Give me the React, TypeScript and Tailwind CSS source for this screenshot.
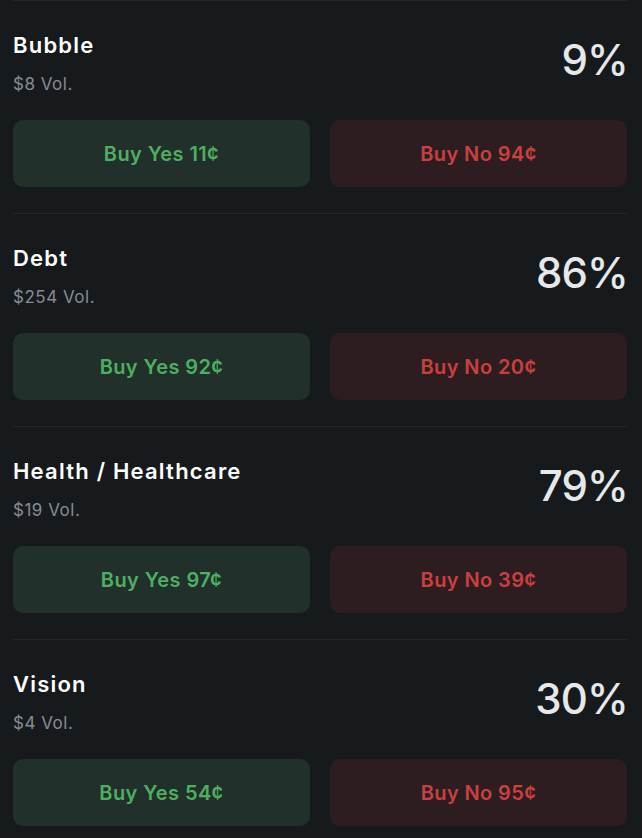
import React from "react";

type Market = {
  name: string;
  volume: string;
  chance: string;
  yes: string;
  no: string;
};

const markets: Market[] = [
  { name: "Bubble", volume: "$8 Vol.", chance: "9%", yes: "11¢", no: "94¢" },
  { name: "Debt", volume: "$254 Vol.", chance: "86%", yes: "92¢", no: "20¢" },
  { name: "Health / Healthcare", volume: "$19 Vol.", chance: "79%", yes: "97¢", no: "39¢" },
  { name: "Vision", volume: "$4 Vol.", chance: "30%", yes: "54¢", no: "95¢" },
];

function MarketRow({ m }: { m: Market }) {
  return (
    <div className="border-t border-[#23272a] pt-[30px] pb-[26px]">
      <div className="flex items-center justify-between">
        <div className="flex flex-col">
          <div className="text-[22px] leading-[28px] font-semibold tracking-[0.055em] text-white">{m.name}</div>
          <div className="mt-[13px] text-[17px] leading-[24px] tracking-[0.03em] text-[#868b92]">{m.volume}</div>
        </div>
        <div className="text-[42px] leading-none font-medium tracking-[-0.02em] text-[#e6e8ea] pb-[7px] -mr-[1px]">
          {m.chance}
        </div>
      </div>
      <div className="mt-[24px] grid grid-cols-2 gap-[20px]">
        <button className="h-[67px] rounded-[10px] bg-[#21302a] text-[20px] font-semibold tracking-[0.02em] text-[#4fae62]">
          Buy Yes {m.yes}
        </button>
        <button className="h-[67px] rounded-[10px] bg-[#2d1d20] text-[20px] font-semibold tracking-[0.02em] text-[#c9403f]">
          Buy No {m.no}
        </button>
      </div>
    </div>
  );
}

export default function App() {
  return (
    <div
      className="min-h-screen w-full bg-[#171a1d] pl-[13px] pr-[15px]"
      style={{ fontFamily: "Inter, 'Noto Sans', sans-serif" }}
    >
      {markets.map((m) => (
        <MarketRow key={m.name} m={m} />
      ))}
    </div>
  );
}
